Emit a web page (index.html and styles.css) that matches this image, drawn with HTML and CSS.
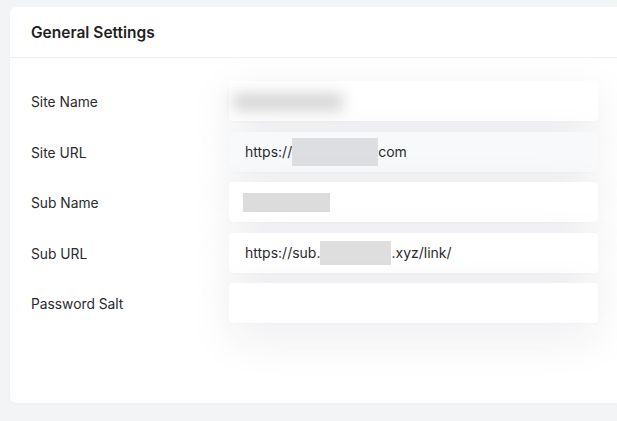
FILE: index.html
```html
<!DOCTYPE html>
<html lang="en">
<head>
    <meta charset="UTF-8">
    <meta name="viewport" content="width=device-width, initial-scale=1.0">
    <title>General Settings</title>
    <link rel="stylesheet" href="styles.css">
</head>
<body>

    <div class="card">
        <div class="card-header">General Settings</div>

        <div class="card-body">
            <div class="row">
                <label class="label">Site Name</label>
                <div class="field"><span class="mask mask-blur"></span></div>
            </div>
            <div class="row">
                <label class="label">Site URL</label>
                <div class="field field-alt">https://<span class="mask mask-url"></span>com</div>
            </div>
            <div class="row">
                <label class="label">Sub Name</label>
                <div class="field"><span class="mask mask-sub"></span></div>
            </div>
            <div class="row">
                <label class="label">Sub URL</label>
                <div class="field">https://sub.<span class="mask mask-suburl"></span>.xyz/link/</div>
            </div>
            <div class="row">
                <label class="label">Password Salt</label>
                <div class="field"></div>
            </div>
        </div>
    </div>

</body>
</html>
```

FILE: styles.css
```css
body, html {
    margin: 0;
    padding: 0;
    height: 100%;
    overflow: hidden;
}
body {
    background-color: #f3f4f6;
    font-family: Inter, "Noto Sans", sans-serif;
    color: #27272a;
    padding: 7px 0 0 10px;
    box-sizing: border-box;
}

/* la tarjeta sigue fuera del borde derecho */
.card {
    height: 396px;
    background-color: #fff;
    border-radius: 6px 0 0 6px;
    box-shadow: 0 1px 2px rgba(0, 0, 0, 0.03);
}
.card-header {
    height: 51px;
    box-sizing: border-box;
    padding: 16px 21px 0;
    font-size: 15.5px;
    font-weight: 600;
    color: #1f1f23;
    border-bottom: 1px solid #eef0f3;
}

.card-body {
    padding: 23px 0 0 21px;
    display: flex;
    flex-direction: column;
    gap: 10.5px;
}
.row {
    display: flex;
    align-items: center;
}
.label {
    width: 198px;
    padding-top: 2px;
    font-size: 13.8px;
    color: #2a2a2e;
}

/* campos */
.field {
    width: 369px;
    height: 40px;
    box-sizing: border-box;
    padding: 0 16px;
    display: flex;
    align-items: center;
    background-color: #fff;
    border-radius: 4px;
    font-size: 14px;
    color: #2a2a2e;
    box-shadow: 0 14px 46px rgba(30, 40, 70, 0.085), 0 1px 2px rgba(0, 0, 0, 0.02);
}
.field-alt {
    background-color: #f8f9fb;
}

/* zonas tapadas */
.mask {
    display: inline-block;
    background-color: #dddee1;
}
.mask-blur {
    width: 110px;
    height: 18px;
    margin-left: -12px;
    margin-top: 2px;
    background-color: #d6d6d6;
    filter: blur(7px);
}
.mask-url {
    width: 86px;
    height: 28px;
}
.mask-sub {
    width: 87px;
    height: 19px;
    margin-left: -2px;
    background-color: #dcdcdc;
}
.mask-suburl {
    width: 71px;
    height: 24px;
    background-color: #dedede;
}
```
